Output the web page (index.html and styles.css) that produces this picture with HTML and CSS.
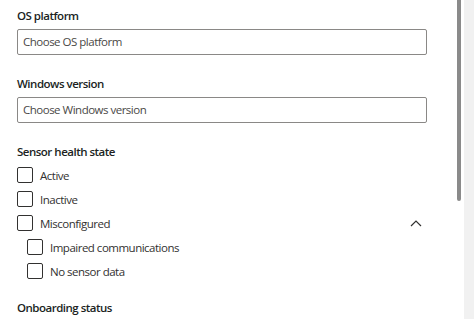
FILE: index.html
```html
<!DOCTYPE html>
<html>
	<head>
		<meta charset="utf-8">
		<title>Filters</title>
		<link rel="stylesheet" href="styles.css">
	</head>
	<body>
		<div class="panel">
			<div class="filters">
				<div class="field">
					<label class="label">OS platform</label>
					<div class="input">Choose OS platform</div>
				</div>
				<div class="field">
					<label class="label">Windows version</label>
					<div class="input">Choose Windows version</div>
				</div>
				<div class="field">
					<label class="label">Sensor health state</label>
					<ul class="checks">
						<li class="check"><span class="box"></span>Active</li>
						<li class="check"><span class="box"></span>Inactive</li>
						<li class="check">
							<span class="box"></span>Misconfigured
							<svg class="chevron" width="12" height="8" viewBox="0 0 12 8"><path d="M1 7 L6 2 L11 7" fill="none" stroke="#323130" stroke-width="1.2"/></svg>
						</li>
						<li class="check sub"><span class="box"></span>Impaired communications</li>
						<li class="check sub"><span class="box"></span>No sensor data</li>
					</ul>
				</div>
				<div class="field">
					<label class="label">Onboarding status</label>
				</div>
			</div>
			<div class="scrollbar">
				<div class="thumb"></div>
			</div>
		</div>
	</body>
</html>
```

FILE: styles.css
```css
* {
	margin: 0;
	padding: 0;
	box-sizing: border-box;
}

ul {
	list-style: none;
}

body {
	font-family: "Open Sans", "Noto Sans", sans-serif;
	font-size: 11.5px;
	letter-spacing: -0.5px;
	color: #201f1e;
	background: #ffffff;
	overflow: hidden;
}

.panel {
	display: flex;
	height: 319px;
}

.filters {
	width: 410px;
	margin-left: 17px;
	padding-top: 6px;
	display: flex;
	flex-direction: column;
	gap: 19px;
}

.field {
	display: flex;
	flex-direction: column;
}

.label {
	display: block;
	line-height: 20px;
	font-weight: 600;
	color: #201f1e;
}

.input {
	margin-top: 3px;
	height: 26px;
	border: 1px solid #8a8886;
	border-radius: 2px;
	padding-left: 5px;
	line-height: 24px;
	color: #4a4846;
}

.checks {
	margin-top: 1px;
	margin-bottom: -4px;
}

.check {
	display: flex;
	align-items: center;
	height: 24px;
	position: relative;
	color: #323130;
}

.check.sub {
	padding-left: 10px;
}

.box {
	width: 16px;
	height: 16px;
	border: 1px solid #323130;
	border-radius: 2px;
	margin-right: 7px;
}

.chevron {
	position: absolute;
	right: 5px;
	top: 8px;
}

.scrollbar {
	margin-left: auto;
	width: 18px;
	display: flex;
	background: linear-gradient(to right, #ffffff 0, #ffffff 8px, #f1f1f1 8px);
}

.thumb {
	width: 4px;
	height: 201px;
	margin-left: 1px;
	background: #8a8a8a;
	border-radius: 0 0 2px 2px;
}
```
